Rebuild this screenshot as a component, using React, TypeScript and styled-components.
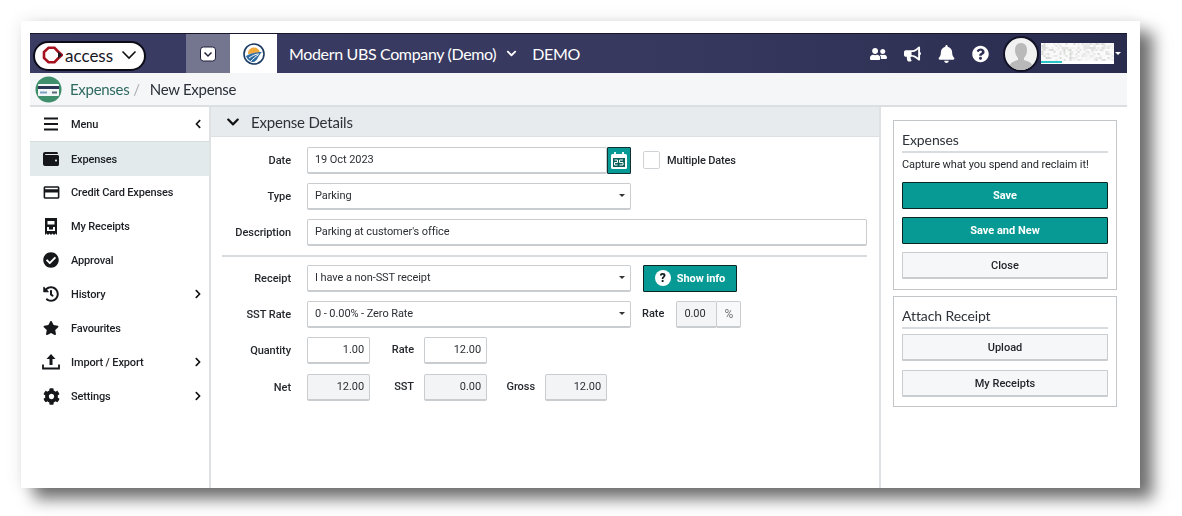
import React from "react";
import styled, { createGlobalStyle } from "styled-components";
import { FaUserFriends, FaBullhorn, FaBell, FaQuestionCircle, FaWallet, FaCheckCircle, FaHistory, FaStar, FaCog, FaChevronDown, FaChevronLeft, FaChevronRight } from "react-icons/fa";
import { MdOutlineCreditCard } from "react-icons/md";

const Global = createGlobalStyle`
  html, body { margin: 0; padding: 0; background: #fff; }
  body { font-family: Roboto, "Liberation Sans", sans-serif; font-size: 11px; color: #1f2328; width: 1182px; height: 516px; overflow: hidden; }
`;

const Page = styled.div`
  box-sizing: border-box;
  width: 1182px;
  height: 516px;
  padding: 21px 42px 28px 21px;
`;
const Frame = styled.div`
  box-sizing: border-box;
  height: 467px;
  background: #fff;
  box-shadow: 13px 11px 15px rgba(0, 0, 0, 0.55), 0 0 16px rgba(0, 0, 0, 0.1);
  padding: 12px 13px 0 9px;
  display: flex;
  flex-direction: column;
  filter: blur(0.3px);
`;
const TopBar = styled.header`
  height: 40px;
  flex: none;
  display: flex;
  align-items: stretch;
  box-sizing: border-box;
  border-top: 1px solid #15162c;
  background: linear-gradient(90deg, #3a3c64 0%, #36385e 60%, #2a2c4e 100%);
`;
const AccessPill = styled.div`
  box-sizing: border-box;
  margin: 7px 0 2px 3px;
  width: 113px;
  height: 30px;
  background: #fff;
  border: 2px solid #0c0c18;
  border-radius: 15px;
  display: flex;
  align-items: center;
  padding: 0 7px 2px 7px;
  gap: 2px;
  font: 400 17px Lato, sans-serif;
  color: #17171f;
`;
const TabMuted = styled.div`
  margin-left: 40px;
  width: 44px;
  background: #74758f;
  display: flex;
  align-items: center;
  justify-content: center;
`;
const TabActive = styled.div`
  width: 47px;
  background: #fff;
  display: flex;
  align-items: center;
  justify-content: center;
`;
const CompanyName = styled.div`
  margin-left: 12px;
  color: #fff;
  font: 400 16px Lato, sans-serif;
  letter-spacing: -0.35px;
  display: flex;
  align-items: center;
  white-space: nowrap;
`;
const CompanyCaret = styled.span`
  display: flex;
  margin: 0 15px 0 10px;
  font-size: 11px;
`;
const TopIcons = styled.div`
  margin-left: auto;
  display: flex;
  align-items: center;
  color: #fff;
  gap: 17px;
  font-size: 18px;
  padding-right: 6px;
`;
const IconSlot = styled.span`
  display: flex;
  width: 17px;
  justify-content: center;
`;
const Avatar = styled.div`
  width: 36px;
  height: 36px;
  border-radius: 50%;
  background: #f1f1f1;
  border: 2px solid #111226;
  box-sizing: border-box;
  overflow: hidden;
  margin: 0 -15px 0 -3px;
  display: flex;
  justify-content: center;
  align-items: flex-end;
`;
const UserBox = styled.div`
  position: relative;
  width: 73px;
  height: 21px;
  background-color: #fafafa;
  display: flex;
`;
const UserLine = styled.div`
  position: absolute;
  left: 0;
  right: 0;
  bottom: 0;
  height: 3px;
  background: #fff;
`;
const UserProgress = styled.div`
  width: 21px;
  height: 2px;
  background: #2ac4c8;
`;
const UserCaret = styled.span`
  width: 0;
  height: 0;
  margin: 0 0 0 -16px;
  border-left: 3px solid transparent;
  border-right: 3px solid transparent;
  border-top: 3px solid #fff;
`;
const Crumbs = styled.nav`
  height: 34px;
  flex: none;
  box-sizing: border-box;
  background: #f5f6f8;
  border-bottom: 2px solid #dcdfe1;
  display: flex;
  align-items: center;
  padding-left: 5px;
  font: 400 15px Lato, sans-serif;
  letter-spacing: -0.3px;
`;
const CrumbLink = styled.span`
  margin-left: 8px;
  color: #2d6a60;
`;
const CrumbSep = styled.span`
  color: #a9afb3;
  margin: 0 10px 0 4px;
`;
const CrumbNow = styled.span`
  color: #2b3038;
`;
const Body = styled.div`
  flex: 1;
  display: flex;
  min-height: 0;
`;
const Sidebar = styled.aside`
  width: 181px;
  flex: none;
  box-sizing: border-box;
  border-right: 2px solid #dfe2e4;
`;
const NavItem = styled.div<{ $active?: boolean; $h?: number }>`
  height: ${p => p.$h ?? 34}px;
  display: flex;
  align-items: center;
  background: ${p => (p.$active ? "#e2eaec" : "transparent")};
  border-top: ${p => (p.$active ? "1px solid #d5dcde" : "none")};
  box-sizing: border-box;
  padding: 0 7px 0 11px;
  font-size: 11px;
  font-weight: 500;
  letter-spacing: -0.15px;
  color: #1c1f24;
`;
const NavIcon = styled.span`
  width: 20px;
  margin-right: 10px;
  display: flex;
  justify-content: center;
  font-size: 16px;
  color: #15171b;
`;
const NavChevron = styled.span`
  margin-left: auto;
  margin-right: -1px;
  display: flex;
  font-size: 10px;
  color: #111;
`;
const Main = styled.main`
  width: 670px;
  flex: none;
  box-sizing: border-box;
  border-right: 2px solid #dfe2e4;
`;
const SectionHead = styled.div`
  height: 30px;
  box-sizing: border-box;
  background: #e8ebee;
  border-bottom: 1px solid #dde0e3;
  display: flex;
  align-items: center;
  padding-left: 15px;
  gap: 11px;
  font: 400 15px Lato, sans-serif;
  letter-spacing: -0.2px;
  color: #2d3238;
`;
const HeadChevron = styled.span`
  display: flex;
  font-size: 14px;
  color: #111;
`;
const Form = styled.div`
  padding: 10px 12px 0 11px;
  display: flex;
  flex-direction: column;
  gap: 10px;
`;
const Row = styled.div<{ $nudge?: number }>`
  display: flex;
  align-items: center;
  height: 26px;
  margin-top: ${p => p.$nudge ?? 0}px;
`;
const Label = styled.label<{ $w?: number }>`
  width: ${p => p.$w ?? 69}px;
  flex: none;
  text-align: right;
  font-weight: 500;
  color: #24282d;
  margin-right: ${p => (p.$w ? 10 : 16)}px;
  margin-top: ${p => (p.$w ? -2 : 0)}px;
  letter-spacing: -0.05px;
`;
const Field = styled.div<{ $w?: number; $gray?: boolean; $right?: boolean }>`
  box-sizing: border-box;
  width: ${p => (p.$w ? `${p.$w}px` : "auto")};
  ${p => (p.$w ? "" : "flex: 1;")}
  height: 27px;
  border: 1px solid #c9cdd0;
  border-bottom-width: 2px;
  border-radius: 2px;
  background: ${p => (p.$gray ? "#f3f4f6" : "#fff")};
  display: flex;
  align-items: center;
  justify-content: ${p => (p.$right ? "flex-end" : "space-between")};
  padding: 0 5px 0 7px;
  font-size: 11px;
  letter-spacing: -0.08px;
  color: #2b2f34;
`;
const SelectCaret = styled.span`
  width: 0;
  height: 0;
  border-left: 3px solid transparent;
  border-right: 3px solid transparent;
  border-top: 3px solid #333;
`;
const CalendarButton = styled.div`
  box-sizing: border-box;
  width: 24px;
  height: 27px;
  background: #079a94;
  border: 1px solid #10312f;
  border-radius: 1px;
  display: flex;
  align-items: center;
  justify-content: center;
`;
const CheckBox = styled.span`
  box-sizing: border-box;
  width: 17px;
  height: 18px;
  margin: 0 7px 0 12px;
  border: 1px solid #cfd3d6;
  border-radius: 2px;
  background: #fff;
`;
const CheckLabel = styled.span`
  font-weight: 500;
  letter-spacing: -0.15px;
  color: #24282d;
`;
const Divider = styled.hr`
  margin: 0 0 -2px 0;
  border: none;
  height: 2px;
  background: #d9dcde;
`;
const InfoButton = styled.div`
  box-sizing: border-box;
  margin-left: 12px;
  width: 94px;
  height: 27px;
  background: #079a94;
  border: 1px solid #0b2523;
  border-radius: 1px;
  color: #fff;
  font-weight: 700;
  font-size: 11px;
  letter-spacing: -0.1px;
  display: flex;
  align-items: center;
  justify-content: center;
  gap: 6px;
`;
const InfoIcon = styled.span`
  width: 16px;
  height: 16px;
  border-radius: 50%;
  background: #fff;
  color: #0d1a1a;
  font-size: 12px;
  font-weight: 900;
  display: flex;
  align-items: center;
  justify-content: center;
`;
const RateLabel = styled.span`
  margin-left: 11px;
  margin-right: 12px;
  font-weight: 500;
  color: #24282d;
  margin-top: -2px;
`;
const InputGroup = styled.div`
  display: flex;
  width: 65px;
`;
const GroupAddon = styled.span`
  box-sizing: border-box;
  width: 24px;
  height: 27px;
  flex: none;
  border: 1px solid #c9cdd0;
  border-left: none;
  border-bottom-width: 2px;
  border-radius: 0 2px 2px 0;
  background: #f8f9fa;
  color: #777;
  font-size: 12px;
  display: flex;
  align-items: center;
  justify-content: center;
`;
const Side = styled.aside`
  flex: 1;
  padding: 13px 10px 0 12px;
  display: flex;
  flex-direction: column;
  gap: 6px;
`;
const Card = styled.section`
  box-sizing: border-box;
  border: 1px solid #c3c6c9;
  padding: 0 8px 9px 8px;
  display: flex;
  flex-direction: column;
`;
const CardTitle = styled.h3`
  margin: 0;
  height: 32px;
  box-sizing: border-box;
  padding-top: 10px;
  border-bottom: 2px solid #d9dcde;
  font: 400 14px/18px Lato, sans-serif;
  letter-spacing: -0.1px;
  color: #2d3238;
`;
const CardText = styled.p`
  margin: 5px 0 11px 0;
  font-size: 11px;
  line-height: 13px;
  font-weight: 400;
  letter-spacing: -0.08px;
  color: #24282d;
`;
const ButtonStack = styled.div<{ $top?: number; $bottom?: number; $gap?: number }>`
  display: flex;
  flex-direction: column;
  gap: ${p => p.$gap ?? 8}px;
  margin-top: ${p => p.$top ?? 0}px;
  margin-bottom: ${p => p.$bottom ?? 0}px;
`;
const ActionButton = styled.div<{ $primary?: boolean }>`
  box-sizing: border-box;
  height: 27px;
  display: flex;
  align-items: center;
  justify-content: center;
  border-radius: 1px;
  font-size: 11px;
  font-weight: ${p => (p.$primary ? 700 : 500)};
  background: ${p => (p.$primary ? "#079a94" : "#f6f7f9")};
  color: ${p => (p.$primary ? "#fff" : "#1f2328")};
  border: 1px solid ${p => (p.$primary ? "#0b2523" : "#c9cdd0")};
  ${p => (p.$primary ? "" : "border-bottom-width: 2px;")}
`;

const ReceiptIcon = () => (
  <svg width="14" height="17" viewBox="0 0 14 17">
    <path fill="#15171b" d="M1 0h12v17l-1.5-1.5L10 17l-1.5-1.5L7 17l-1.5-1.5L4 17l-1.5-1.5L1 17z" />
    <rect x="3.5" y="3" width="7" height="3.5" fill="#fff" />
    <rect x="3" y="9" width="8" height="4" fill="#fff" />
    <rect x="5" y="9" width="4" height="2.5" fill="#15171b" />
  </svg>
);
const MenuIcon = () => (
  <svg width="16" height="14" viewBox="0 0 16 14">
    <path d="M1 1.5h14M1 7h14M1 12.5h14" stroke="#15171b" strokeWidth="2.2" />
  </svg>
);
const ExportIcon = () => (
  <svg width="18" height="16" viewBox="0 0 18 16">
    <path fill="#15171b" d="M9 0l4.500 5H10.500v6h-3V5H4.500z" />
    <path d="M1 10.500v4h16v-4" fill="none" stroke="#15171b" strokeWidth="1.800" />
  </svg>
);
const BrandMark = () => (
  <svg width="21" height="18" viewBox="0 0 21 18">
    <path d="M6.500 1.800h6L16 5.500 20 9l-4 3.500-3.500 3.700h-6L2 12V6z" fill="#fff" stroke="#a5111c" strokeWidth="2.600" />
    <path d="M16 5.500L20 9l-4 3.500z" fill="#1a1a24" />
  </svg>
);
const PillChevron = () => (
  <svg width="16" height="10" viewBox="0 0 16 10" style={{ marginLeft: "auto" }}>
    <path d="M1.500 1.500L8 8l6.500-6.500" fill="none" stroke="#111" strokeWidth="1.600" />
  </svg>
);
const BagIcon = () => (
  <svg width="18" height="18" viewBox="0 0 18 18">
    <rect x="1.500" y="2" width="15" height="14" rx="3" fill="#fff" stroke="#20213a" strokeWidth="1" />
    <path d="M5.500 7.500L9 11l3.500-3.500" fill="none" stroke="#20213a" strokeWidth="1.500" />
    <path d="M6 3.500h.1M12 3.500h.1" stroke="#20213a" strokeWidth="1.600" />
  </svg>
);
const CompanyLogo = () => (
  <svg width="22" height="22" viewBox="0 0 22 22">
    <circle cx="11" cy="11" r="10" fill="#fff" stroke="#1d3b63" strokeWidth="1.600" />
    <path d="M5 11a6 6 0 0 1 12 -1z" fill="#f2a93b" />
    <path d="M3 13c5-3 11-4 16-4-3 2-4 8-8 10-4 0-7-3-8-6z" fill="#2f6da3" />
    <path d="M6 15c3-2 6-4 10-4M8 18c2-2 5-5 7-6" stroke="#fff" strokeWidth="1" fill="none" />
  </svg>
);
const CardLogo = () => (
  <svg width="27" height="27" viewBox="0 0 27 27">
    <circle cx="13.500" cy="13.500" r="13" fill="#3f8f6c" />
    <rect x="3" y="8" width="21" height="12" rx="1" fill="#f3f6f6" />
    <rect x="3" y="10" width="21" height="3" fill="#2a3454" />
    <rect x="5" y="15.500" width="7" height="2" fill="#7fa0c4" />
    <rect x="17" y="15.500" width="5" height="2" fill="#5d6b7b" />
  </svg>
);
const CalendarIcon = () => (
  <svg width="18" height="19" viewBox="0 0 18 19">
    <rect x="1" y="3" width="16" height="15" rx="1.500" fill="#fff" />
    <rect x="3" y="7" width="12" height="9" fill="#0a5f5b" />
    <path d="M5 1v4M13 1v4" stroke="#fff" strokeWidth="1.800" />
    <path d="M4.500 9h3v2.500h-3V14h3M9.500 9h3.500M9.500 9v2.500H13V14H9.500" stroke="#fff" strokeWidth="1" fill="none" />
  </svg>
);
const Silhouette = () => (
  <svg width="30" height="30" viewBox="0 0 30 30">
    <path fill="#b9b9b9" d="M15 3c4 0 6 3 6 7 0 3-1 6-3 8v2c3 1 7 2 8 5v5H4v-5c1-3 5-4 8-5v-2c-2-2-3-5-3-8 0-4 2-7 6-7z" />
  </svg>
);
const noiseCells = Array.from({ length: 36 * 9 }, (_, i) => {
  const v = Math.abs(Math.sin(i * 12.9898) * 43758.5453) % 1;
  return { x: (i % 36) * 2, y: Math.floor(i / 36) * 2, o: v > 0.45 ? (v - 0.45) * 0.9 : 0 };
});
const RedactedNoise = () => (
  <svg width="73" height="18" viewBox="0 0 72 18">
    {noiseCells.filter(c => c.o > 0).map((c, i) => (
      <rect key={i} x={c.x} y={c.y} width="2" height="2" fill="#aeb4ae" opacity={c.o} />
    ))}
  </svg>
);

const navItems: { label: string; icon: React.ReactNode; chevron?: boolean; h?: number }[] = [
  { label: "Credit Card Expenses", icon: <MdOutlineCreditCard size={19} />, h: 33 },
  { label: "My Receipts", icon: <ReceiptIcon /> },
  { label: "Approval", icon: <FaCheckCircle /> },
  { label: "History", icon: <FaHistory />, chevron: true },
  { label: "Favourites", icon: <FaStar /> },
  { label: "Import / Export", icon: <ExportIcon />, chevron: true },
  { label: "Settings", icon: <FaCog size={17} />, chevron: true },
];

export default function App() {
  return (
    <Page>
      <Global />
      <Frame>
        <TopBar>
          <AccessPill>
            <BrandMark />
            access
            <PillChevron />
          </AccessPill>
          <TabMuted><BagIcon /></TabMuted>
          <TabActive><CompanyLogo /></TabActive>
          <CompanyName>
            Modern UBS Company (Demo)
            <CompanyCaret><FaChevronDown /></CompanyCaret>
            DEMO
          </CompanyName>
          <TopIcons>
            <IconSlot><FaUserFriends /></IconSlot>
            <IconSlot><FaBullhorn /></IconSlot>
            <IconSlot><FaBell /></IconSlot>
            <IconSlot><FaQuestionCircle /></IconSlot>
            <Avatar><Silhouette /></Avatar>
            <UserBox>
              <RedactedNoise />
              <UserLine><UserProgress /></UserLine>
            </UserBox>
            <UserCaret />
          </TopIcons>
        </TopBar>
        <Crumbs>
          <CardLogo />
          <CrumbLink>Expenses</CrumbLink>
          <CrumbSep>/</CrumbSep>
          <CrumbNow>New Expense</CrumbNow>
        </Crumbs>
        <Body>
          <Sidebar>
            <NavItem>
              <NavIcon><MenuIcon /></NavIcon>
              Menu
              <NavChevron><FaChevronLeft /></NavChevron>
            </NavItem>
            <NavItem $active $h={35}>
              <NavIcon><FaWallet /></NavIcon>
              Expenses
            </NavItem>
            {navItems.map(n => (
              <NavItem key={n.label} $h={n.h}>
                <NavIcon>{n.icon}</NavIcon>
                {n.label}
                {n.chevron && <NavChevron><FaChevronRight /></NavChevron>}
              </NavItem>
            ))}
          </Sidebar>
          <Main>
            <SectionHead>
              <HeadChevron><FaChevronDown /></HeadChevron>
              Expense Details
            </SectionHead>
            <Form>
              <Row>
                <Label>Date</Label>
                <Field $w={300}>19 Oct 2023</Field>
                <CalendarButton><CalendarIcon /></CalendarButton>
                <CheckBox />
                <CheckLabel>Multiple Dates</CheckLabel>
              </Row>
              <Row>
                <Label>Type</Label>
                <Field $w={324}>Parking<SelectCaret /></Field>
              </Row>
              <Row>
                <Label>Description</Label>
                <Field>Parking at customer's office</Field>
              </Row>
              <Divider />
              <Row>
                <Label>Receipt</Label>
                <Field $w={324}>I have a non-SST receipt<SelectCaret /></Field>
                <InfoButton><InfoIcon>?</InfoIcon>Show info</InfoButton>
              </Row>
              <Row>
                <Label>SST Rate</Label>
                <Field $w={324}>0 - 0.00% - Zero Rate<SelectCaret /></Field>
                <RateLabel>Rate</RateLabel>
                <InputGroup>
                  <Field $w={42} $gray>0.00</Field>
                  <GroupAddon>%</GroupAddon>
                </InputGroup>
              </Row>
              <Row>
                <Label>Quantity</Label>
                <Field $w={63} $right>1.00</Field>
                <Label $w={44}>Rate</Label>
                <Field $w={63} $right>12.00</Field>
              </Row>
              <Row $nudge={1}>
                <Label>Net</Label>
                <Field $w={63} $gray $right>12.00</Field>
                <Label $w={44}>SST</Label>
                <Field $w={63} $gray $right>0.00</Field>
                <Label $w={48}>Gross</Label>
                <Field $w={62} $gray $right>12.00</Field>
              </Row>
            </Form>
          </Main>
          <Side>
            <Card>
              <CardTitle>Expenses</CardTitle>
              <CardText>Capture what you spend and reclaim it!</CardText>
              <ButtonStack $bottom={1}>
                <ActionButton $primary>Save</ActionButton>
                <ActionButton $primary>Save and New</ActionButton>
                <ActionButton>Close</ActionButton>
              </ButtonStack>
            </Card>
            <Card>
              <CardTitle>Attach Receipt</CardTitle>
              <ButtonStack $top={5} $gap={9}>
                <ActionButton>Upload</ActionButton>
                <ActionButton>My Receipts</ActionButton>
              </ButtonStack>
            </Card>
          </Side>
        </Body>
      </Frame>
    </Page>
  );
}
